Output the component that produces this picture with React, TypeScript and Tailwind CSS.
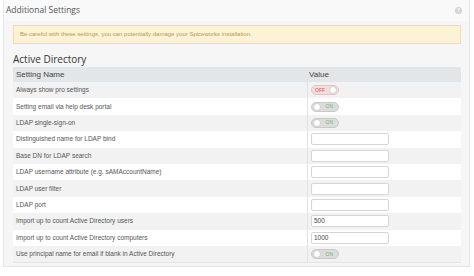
type Row = {
  label: string;
  kind: "off" | "on" | "input";
  value?: string;
};

const rows: Row[] = [
  { label: "Always show pro settings", kind: "off" },
  { label: "Setting email via help desk portal", kind: "on" },
  { label: "LDAP single-sign-on", kind: "on" },
  { label: "Distinguished name for LDAP bind", kind: "input" },
  { label: "Base DN for LDAP search", kind: "input" },
  { label: "LDAP username attribute (e.g. sAMAccountName)", kind: "input" },
  { label: "LDAP user filter", kind: "input" },
  { label: "LDAP port", kind: "input" },
  { label: "Import up to count Active Directory users", kind: "input", value: "500" },
  { label: "Import up to count Active Directory computers", kind: "input", value: "1000" },
  { label: "Use principal name for email if blank in Active Directory", kind: "on" },
];

const Toggle = ({ on }: { on: boolean }) => {
  if (!on) {
    return (
      <div className="flex h-[10px] w-[28px] items-center justify-between rounded-full border border-[#e3c4c4] bg-[#f3dede] pl-[3px] pr-[1px]">
        <span className="text-[5px] leading-none text-[#d9534f]">OFF</span>
        <span className="h-[8px] w-[8px] rounded-full border border-[#d0d0d0] bg-white" />
      </div>
    );
  }
  return (
    <div className="flex h-[10px] w-[28px] items-center justify-between rounded-full border border-[#c9c9c9] bg-[#dcdcdc] pl-[1px] pr-[5px]">
      <span className="h-[8px] w-[8px] rounded-full border border-[#d0d0d0] bg-white" />
      <span className="text-[5px] leading-none text-[#74b566]">ON</span>
    </div>
  );
};

export default function App() {
  return (
    <div
      className="h-[276px] w-[474px] bg-white pl-[3px] pr-[4px]"
      style={{ fontFamily: "'Liberation Sans', Arial, sans-serif" }}
    >
      <div className="h-[267px] border border-t-0 border-[#e6e6e6] bg-[#f6f6f6]">
        {/* Header */}
        <div className="flex h-[21px] items-center justify-between bg-[#f9f9f9] pl-[2px] pr-[7px]">
          <span
            className="text-[8.5px] text-[#555]"
            style={{ fontFamily: "'Open Sans', sans-serif" }}
          >
            Additional Settings
          </span>
          <span className="flex h-[7px] w-[7px] items-center justify-center rounded-full bg-[#d4d4d4] text-[5px] font-bold leading-none text-white">
            ?
          </span>
        </div>

        <div className="px-[9px]">
          {/* Warning */}
          <div className="mt-[4px] flex h-[19px] w-[448px] items-center border border-[#f2dea5] bg-[#fcf3d6] pl-[6px] text-[6px] text-[#b8994f]">
            Be careful with these settings, you can potentially damage your Spiceworks installation.
          </div>

          <div
            className="mt-[8px] h-[14px] text-[10px] leading-[14px] text-[#333]"
            style={{ fontFamily: "'Open Sans', sans-serif" }}
          >
            Active Directory
          </div>

          {/* Table */}
          <div className="mt-[1px] w-[448px] border-b border-[#e4e4e4]">
            <div className="flex h-[15px] items-center bg-[#e3e6e9] text-[8px] text-[#444]">
              <div className="w-[294px] pl-[3px]">Setting Name</div>
              <div className="pl-[2px]">Value</div>
            </div>
            {rows.map((r, i) => (
              <div
                key={r.label}
                className={`flex h-[16.4px] items-center text-[6.5px] text-[#555] ${
                  i % 2 === 0 ? "bg-[#f2f2f2]" : "bg-white"
                }`}
              >
                <div className="w-[294px] pl-[3px]">{r.label}</div>
                <div className="flex h-full items-center border-l border-[#e2e2e2] pl-[3px]">
                  {r.kind === "off" && <Toggle on={false} />}
                  {r.kind === "on" && <Toggle on={true} />}
                  {r.kind === "input" && (
                    <div className="flex h-[12px] w-[78px] items-center rounded-[2px] border border-[#d6d6d6] bg-white pl-[2px] text-[6.5px] text-[#444]">
                      {r.value}
                    </div>
                  )}
                </div>
              </div>
            ))}
          </div>
        </div>
      </div>
    </div>
  );
}
